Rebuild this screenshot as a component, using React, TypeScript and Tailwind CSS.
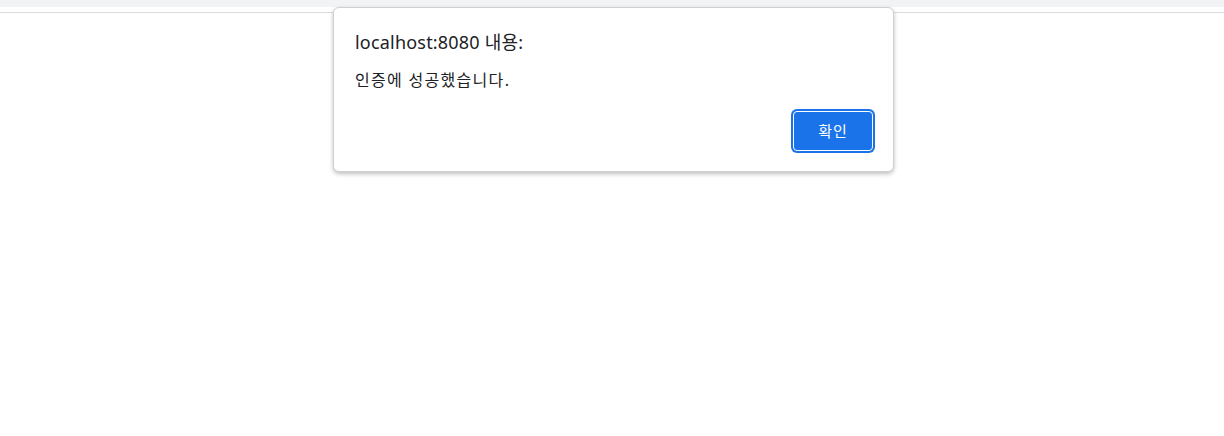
import React from 'react'

export default function App() {
    return (
        <div className="relative w-[1224px] h-[436px] bg-white overflow-hidden" style={{ fontFamily: '"Segoe UI", "Noto Sans", "Noto Sans CJK KR", sans-serif' }}>
            {/* browser chrome strip */}
            <div className="h-[7px] bg-[#f1f3f4]" />
            <div className="h-[6px] bg-white border-b border-[#dadce0]" />

            {/* alert dialog */}
            <div className="absolute left-[333px] top-[7px] w-[561px] h-[165px] bg-white rounded-[6px] border border-[#d0d0d0] shadow-[0_2px_4px_rgba(0,0,0,0.25)] flex flex-col px-[21px]">
                <div className="mt-[21px] text-[18px] leading-[26px] text-[#202124] tracking-[0.2px]">localhost:8080 내용:</div>
                <div className="mt-[14px] text-[16px] leading-[22px] text-[#202124] tracking-[1.3px]">인증에 성공했습니다.</div>
                <div className="flex justify-end mt-[20px]">
                    <button className="w-[80px] h-[40px] rounded-[4px] bg-[#1a73e8] text-white text-[15px] tracking-[1px] ring-2 ring-[#1a73e8] ring-offset-0 border border-white -mr-[1px]">
                        확인
                    </button>
                </div>
            </div>
        </div>
    );
}
